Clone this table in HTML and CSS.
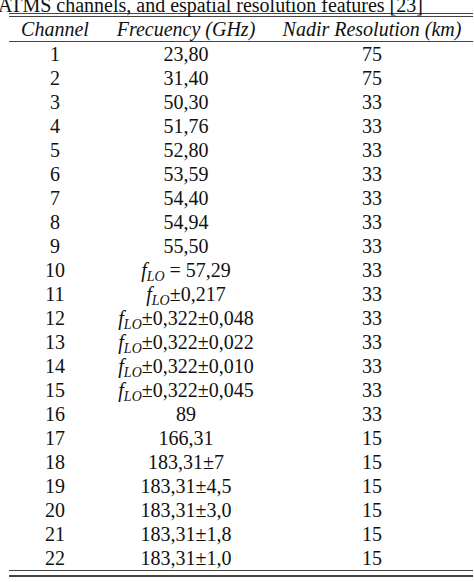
FILE: index.html
```html
<!DOCTYPE html>
<html>
<head>
<meta charset="utf-8">
<link rel="stylesheet" href="styles.css">
</head>
<body>
<div class="page">
  <div class="caption">ATMS channels, and espatial resolution features [23]</div>
  <div class="table">
    <div class="rule thin"></div>
    <div class="gap2"></div>
    <div class="rule thin"></div>
    <div class="row head">
      <div class="c1">Channel</div>
      <div class="c2">Frecuency (GHz)</div>
      <div class="c3">Nadir Resolution (km)</div>
    </div>
    <div class="rule thin"></div>
    <div class="row"><div class="c1">1</div><div class="c2">23,80</div><div class="c3">75</div></div>
    <div class="row"><div class="c1">2</div><div class="c2">31,40</div><div class="c3">75</div></div>
    <div class="row"><div class="c1">3</div><div class="c2">50,30</div><div class="c3">33</div></div>
    <div class="row"><div class="c1">4</div><div class="c2">51,76</div><div class="c3">33</div></div>
    <div class="row"><div class="c1">5</div><div class="c2">52,80</div><div class="c3">33</div></div>
    <div class="row"><div class="c1">6</div><div class="c2">53,59</div><div class="c3">33</div></div>
    <div class="row"><div class="c1">7</div><div class="c2">54,40</div><div class="c3">33</div></div>
    <div class="row"><div class="c1">8</div><div class="c2">54,94</div><div class="c3">33</div></div>
    <div class="row"><div class="c1">9</div><div class="c2">55,50</div><div class="c3">33</div></div>
    <div class="row"><div class="c1">10</div><div class="c2"><i class="f">f<sub>LO</sub></i> = 57,29</div><div class="c3">33</div></div>
    <div class="row"><div class="c1">11</div><div class="c2"><i class="f">f<sub>LO</sub></i>±0,217</div><div class="c3">33</div></div>
    <div class="row"><div class="c1">12</div><div class="c2"><i class="f">f<sub>LO</sub></i>±0,322±0,048</div><div class="c3">33</div></div>
    <div class="row"><div class="c1">13</div><div class="c2"><i class="f">f<sub>LO</sub></i>±0,322±0,022</div><div class="c3">33</div></div>
    <div class="row"><div class="c1">14</div><div class="c2"><i class="f">f<sub>LO</sub></i>±0,322±0,010</div><div class="c3">33</div></div>
    <div class="row"><div class="c1">15</div><div class="c2"><i class="f">f<sub>LO</sub></i>±0,322±0,045</div><div class="c3">33</div></div>
    <div class="row"><div class="c1">16</div><div class="c2">89</div><div class="c3">33</div></div>
    <div class="row"><div class="c1">17</div><div class="c2">166,31</div><div class="c3">15</div></div>
    <div class="row"><div class="c1">18</div><div class="c2">183,31±7</div><div class="c3">15</div></div>
    <div class="row"><div class="c1">19</div><div class="c2">183,31±4,5</div><div class="c3">15</div></div>
    <div class="row"><div class="c1">20</div><div class="c2">183,31±3,0</div><div class="c3">15</div></div>
    <div class="row"><div class="c1">21</div><div class="c2">183,31±1,8</div><div class="c3">15</div></div>
    <div class="row"><div class="c1">22</div><div class="c2">183,31±1,0</div><div class="c3">15</div></div>
    <div class="rule thin"></div>
    <div class="gap4"></div>
    <div class="rule thick"></div>
  </div>
</div>
</body>
</html>
```

FILE: styles.css
```css
html, body {
  margin: 0;
  padding: 0;
  background: #fff;
}
body {
  font-family: "Liberation Serif", "Times New Roman", serif;
  color: #111;
  font-size: 20px;
}
.page {
  width: 474px;
  height: 582px;
  overflow: hidden;
}
.caption {
  height: 18px;
  line-height: 20px;
  margin-top: -5px;
  margin-left: -2px;
  padding-bottom: 5px;
  white-space: nowrap;
  box-sizing: border-box;
}
.table {
  margin-left: 9px;
  width: 464px;
}
.rule {
  background: #444;
}
.rule.thin { height: 1px; }
.rule.thick { height: 2px; }
.gap2 { height: 2px; }
.gap4 { height: 4px; }
.row {
  display: grid;
  grid-template-columns: 92px 170px 202px;
  height: 24px;
  line-height: 24px;
  text-align: center;
  white-space: nowrap;
}
.row.head {
  font-style: italic;
}
.f {
  font-style: italic;
}
.f sub {
  font-size: 14px;
  vertical-align: -4px;
  line-height: 0;
}
```
